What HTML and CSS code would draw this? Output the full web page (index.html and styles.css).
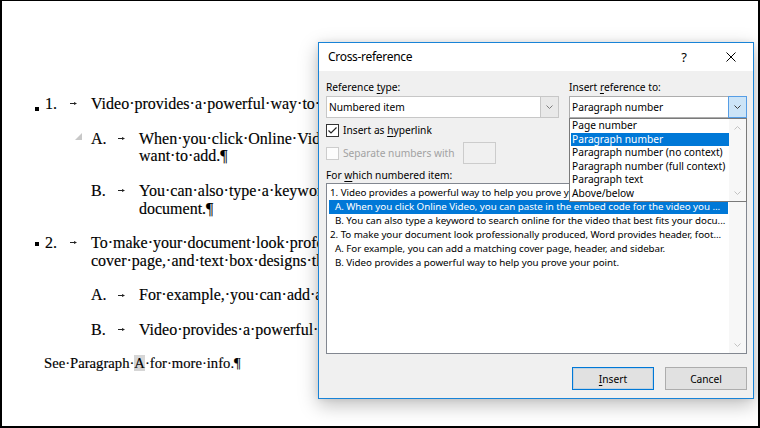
FILE: index.html
```html
<!DOCTYPE html>
<html lang="en">
<head>
<meta charset="utf-8">
<title>Cross-reference</title>
<link rel="stylesheet" href="styles.css">
</head>
<body>
<div class="frame">
  <div class="doc">
    <div class="para lvl1">
      <span class="keep low"></span>
      <span class="num">1.<span class="tab"><svg viewBox="0 0 7 5"><path d="M0 2.5H5"/><path class="head" d="M4 1L7 2.5L4 4Z"/></svg></span></span>
      <span class="txt">Video·provides·a·powerful·way·to·help·you·prove·your·point.¶</span>
    </div>
    <div class="para lvl2">
      <svg class="twist" viewBox="0 0 7 7"><path d="M7 0V7H0Z"/></svg>
      <span class="num">A.<span class="tab"><svg viewBox="0 0 7 5"><path d="M0 2.5H5"/><path class="head" d="M4 1L7 2.5L4 4Z"/></svg></span></span>
      <span class="txt">When·you·click·Online·Video,·you·can·paste·in·the·embed·code·for·the·video·you·<br>want·to·add.¶</span>
    </div>
    <div class="para lvl2">
      <span class="twist blank"></span>
      <span class="num">B.<span class="tab"><svg viewBox="0 0 7 5"><path d="M0 2.5H5"/><path class="head" d="M4 1L7 2.5L4 4Z"/></svg></span></span>
      <span class="txt">You·can·also·type·a·keyword·to·search·online·for·the·video·that·best·fits·your·<br>document.¶</span>
    </div>
    <div class="para lvl1">
      <span class="keep mid"></span>
      <span class="num">2.<span class="tab"><svg viewBox="0 0 7 5"><path d="M0 2.5H5"/><path class="head" d="M4 1L7 2.5L4 4Z"/></svg></span></span>
      <span class="txt">To·make·your·document·look·professionally·produced,·Word·provides·header,·footer,·<br>cover·page,·and·text·box·designs·that·complement·each·other.¶</span>
    </div>
    <div class="para lvl2">
      <span class="twist blank"></span>
      <span class="num">A.<span class="tab"><svg viewBox="0 0 7 5"><path d="M0 2.5H5"/><path class="head" d="M4 1L7 2.5L4 4Z"/></svg></span></span>
      <span class="txt">For·example,·you·can·add·a·matching·cover·page,·header,·and·sidebar.¶</span>
    </div>
    <div class="para lvl2">
      <span class="twist blank"></span>
      <span class="num">B.<span class="tab"><svg viewBox="0 0 7 5"><path d="M0 2.5H5"/><path class="head" d="M4 1L7 2.5L4 4Z"/></svg></span></span>
      <span class="txt">Video·provides·a·powerful·way·to·help·you·prove·your·point.¶</span>
    </div>
    <div class="para plain">
      <span class="txt">See·Paragraph·<span class="field">A</span>·for·more·info.¶</span>
    </div>
  </div>

  <div class="dialog">
    <div class="titlebar">
      <span class="title">Cross-reference</span>
      <span class="help">?</span>
      <span class="close"><svg viewBox="0 0 10 10"><path d="M0.5 0.5L9.5 9.5M9.5 0.5L0.5 9.5"/></svg></span>
    </div>
    <div class="body">
      <div class="top-grid">
        <div class="col">
          <div class="label">Reference <u>t</u>ype:</div>
          <div class="combo">
            <span class="combo-text">Numbered item</span>
            <span class="combo-btn"><svg viewBox="0 0 7 4"><path d="M0.5 0.5L3.5 3.5L6.5 0.5"/></svg></span>
          </div>
          <div class="check-row">
            <span class="box"><svg viewBox="0 0 11 11"><path d="M1.5 5.5L4 8L9.5 2.5"/></svg></span>
            <span>Insert as <u>h</u>yperlink</span>
          </div>
          <div class="check-row disabled">
            <span class="box"></span>
            <span>Separate numbers with</span>
            <span class="sep-input"></span>
          </div>
        </div>
        <div class="col">
          <div class="label">Insert <u>r</u>eference to:</div>
          <div class="combo open">
            <span class="combo-text">Paragraph number</span>
            <span class="combo-btn"><svg viewBox="0 0 7 4"><path d="M0.5 0.5L3.5 3.5L6.5 0.5"/></svg></span>
            <div class="droplist">
              <div class="drop-items">
                <div class="drop-item">Page number</div>
                <div class="drop-item sel">Paragraph number</div>
                <div class="drop-item">Paragraph number (no context)</div>
                <div class="drop-item">Paragraph number (full context)</div>
                <div class="drop-item">Paragraph text</div>
                <div class="drop-item">Above/below</div>
              </div>
              <div class="vscroll">
                <svg viewBox="0 0 7 4"><path d="M0.5 3.5L3.5 0.5L6.5 3.5"/></svg>
                <svg viewBox="0 0 7 4"><path d="M0.5 0.5L3.5 3.5L6.5 0.5"/></svg>
              </div>
            </div>
          </div>
        </div>
      </div>
      <div class="label which">For <u>w</u>hich numbered item:</div>
      <div class="listbox">
        <div class="rows">
          <div class="row">1. Video provides a powerful way to help you prove your point.</div>
          <div class="row sub sel">A. When you click Online Video, you can paste in the embed code for the video you ...</div>
          <div class="row sub">B. You can also type a keyword to search online for the video that best fits your docu...</div>
          <div class="row">2. To make your document look professionally produced, Word provides header, foot...</div>
          <div class="row sub">A. For example, you can add a matching cover page, header, and sidebar.</div>
          <div class="row sub">B. Video provides a powerful way to help you prove your point.</div>
        </div>
        <div class="vscroll">
          <svg viewBox="0 0 7 4"><path d="M0.5 3.5L3.5 0.5L6.5 3.5"/></svg>
          <svg viewBox="0 0 7 4"><path d="M0.5 0.5L3.5 3.5L6.5 0.5"/></svg>
        </div>
      </div>
      <div class="buttons">
        <button class="btn default"><u>I</u>nsert</button>
        <button class="btn">Cancel</button>
      </div>
    </div>
  </div>
</div>
</body>
</html>
```

FILE: styles.css
```css
* {
  box-sizing: border-box;
}

html,
body {
  margin: 0;
  padding: 0;
  background: #fff;
}

.frame {
  position: relative;
  width: 760px;
  height: 428px;
  overflow: hidden;
  background: #fff;
  border-style: solid;
  border-color: #000;
  border-width: 1px 2px 2px 2px;
}

/* ---------- document ---------- */

.doc {
  padding-top: 94.2px;
  font-family: "Liberation Serif", "Times New Roman", serif;
  font-size: 16px;
  line-height: 17.6px;
  color: #000;
  -webkit-text-stroke: 0.15px #000;
}

.para {
  display: flex;
  align-items: flex-start;
  margin-bottom: 17px;
  white-space: nowrap;
}

.lvl1 {
  padding-left: 33px;
}

.lvl2 {
  padding-left: 73px;
}

/* body-text paragraph uses the smaller normal style */
.plain {
  padding-left: 42px;
  margin-top: -0.5px;
  font-size: 14.67px;
  line-height: 17px;
}

.keep {
  flex: none;
  width: 4px;
  height: 4px;
  margin-right: 6px;
  background: #000;
}

.keep.low {
  margin-top: 12px;
}

.keep.mid {
  margin-top: 8px;
}

.twist {
  flex: none;
  width: 7px;
  height: 7px;
  margin: 3.5px 9px 0 0;
  fill: #c8c8c8;
}

.twist.blank {
  display: block;
}

.num {
  flex: none;
  display: flex;
}

.lvl1 .num {
  width: 46px;
}

.lvl2 .num {
  width: 48px;
}

.tab {
  flex: 1;
  display: flex;
  align-items: center;
  justify-content: center;
  height: 17.6px;
  padding-right: 2px;
}

.tab svg {
  width: 7px;
  height: 5px;
  stroke: #222;
  stroke-width: 1;
  fill: none;
}

.tab svg .head {
  fill: #222;
  stroke: none;
}

.field {
  background: #d6d6d6;
}

/* ---------- dialog ---------- */

.dialog {
  position: absolute;
  left: 316px;
  top: 41px;
  width: 436px;
  height: 357px;
  display: flex;
  flex-direction: column;
  background: #f0f0f0;
  border: 1px solid #1883d7;
  box-shadow: 0 6px 18px rgba(0, 0, 0, 0.26), 0 0 6px rgba(0, 0, 0, 0.08);
  font-family: "Noto Sans", "Open Sans", sans-serif;
  font-size: 10.2px;
  color: #000;
}

.titlebar {
  flex: none;
  height: 28px;
  display: flex;
  align-items: center;
  padding-left: 9px;
  background: #fff;
}

.title {
  flex: 1;
  font-size: 12px;
  letter-spacing: -0.3px;
  padding-bottom: 1px;
}

.help {
  width: 14px;
  font-size: 13px;
  text-align: center;
  margin-right: 35px;
  padding-bottom: 1px;
}

.close {
  display: flex;
  width: 10px;
  height: 10px;
  margin-right: 17px;
}

.close svg {
  width: 10px;
  height: 10px;
  stroke: #000;
  stroke-width: 1;
}

.body {
  flex: 1;
  display: flex;
  flex-direction: column;
  padding: 9px 6px 0 7px;
}

.top-grid {
  display: grid;
  grid-template-columns: 233px 178px;
  column-gap: 10px;
}

.label {
  height: 15px;
  line-height: 15px;
  margin-bottom: 1px;
  white-space: nowrap;
}

.label u,
.check-row u,
.btn u {
  text-decoration-thickness: 1px;
  text-underline-offset: 1.5px;
}

.combo {
  position: relative;
  height: 22px;
  display: flex;
  background: #fff;
  border: 1px solid #c7c7c7;
}

.combo-text {
  flex: 1;
  line-height: 20px;
  padding-left: 2px;
  white-space: nowrap;
}

.combo-btn {
  flex: none;
  width: 18px;
  display: flex;
  align-items: center;
  justify-content: center;
  background: #e9e9e9;
  border-left: 1px solid #c7c7c7;
}

.combo-btn svg {
  width: 7px;
  height: 4px;
  fill: none;
  stroke: #7c7c7c;
  stroke-width: 1;
}

.combo.open {
  border-color: #adadad;
}

.combo.open .combo-btn {
  background: #cce4f7;
  border: 1px solid #569de5;
  margin: -1px -1px -1px 0;
  width: 19px;
}

.combo.open .combo-btn svg {
  stroke: #3c3c3c;
}

.droplist {
  position: absolute;
  z-index: 2;
  left: -1px;
  right: -1px;
  top: 21px;
  height: 84px;
  display: grid;
  grid-template-columns: 1fr 17px;
  background: #fff;
  border: 1px solid #7a7a7a;
}

.drop-items {
  padding: 0 0 0 1px;
}

.drop-item {
  height: 13.5px;
  line-height: 13.5px;
  padding-left: 1px;
  white-space: nowrap;
  overflow: hidden;
}

.drop-item.sel,
.row.sel {
  background: #0078d7;
  color: #fff;
}

.vscroll {
  display: flex;
  flex-direction: column;
  justify-content: space-between;
  align-items: center;
  padding: 7px 0 6px;
  background: #f7f7f7;
}

.vscroll svg {
  width: 7px;
  height: 4px;
  fill: none;
  stroke: #c2c2c2;
  stroke-width: 1;
}

.col > .check-row:nth-child(3) {
  height: 14px;
  margin-top: 5px;
}

.col > .check-row:nth-child(4) {
  height: 22px;
  margin-top: 5px;
  display: grid;
  grid-template-columns: 17px 120px 33px;
}

.check-row {
  display: flex;
  align-items: center;
  white-space: nowrap;
}

.box {
  flex: none;
  width: 13px;
  height: 13px;
  margin-right: 4px;
  display: flex;
  align-items: center;
  justify-content: center;
  background: #fff;
  border: 1px solid #333;
}

.box svg {
  width: 11px;
  height: 11px;
  fill: none;
  stroke: #222;
  stroke-width: 1.2;
}

.disabled {
  color: #a2a2a2;
}

.disabled .box {
  border-color: #cccccc;
  background: #fcfcfc;
}

.sep-input {
  width: 33px;
  height: 22px;
  border: 1px solid #cccccc;
  background: #f0f0f0;
}

.label.which {
  height: 14px;
  line-height: 14px;
  margin-top: 4px;
  margin-bottom: 1px;
}

.listbox {
  height: 171px;
  display: grid;
  grid-template-columns: 1fr 17px;
  background: #fff;
  border: 1px solid #828790;
}

.rows {
  padding: 1.5px 1px 0 2px;
  overflow: hidden;
  font-size: 9.8px;
  letter-spacing: -0.05px;
}

.row {
  height: 14px;
  line-height: 14px;
  padding-left: 1px;
  white-space: nowrap;
  overflow: hidden;
}

.row.sub {
  padding-left: 6px;
}

.listbox .vscroll {
  padding: 7px 0 6px;
}

.buttons {
  display: flex;
  justify-content: flex-end;
  gap: 11px;
  margin-top: 13px;
}

.btn {
  width: 82px;
  height: 23px;
  padding: 0;
  font-family: inherit;
  font-size: 10.2px;
  color: #000;
  background: #e1e1e1;
  border: 1px solid #adadad;
}

.btn.default {
  border-color: #0078d7;
  box-shadow: inset 0 0 0 1px #3d95de33;
}
```
